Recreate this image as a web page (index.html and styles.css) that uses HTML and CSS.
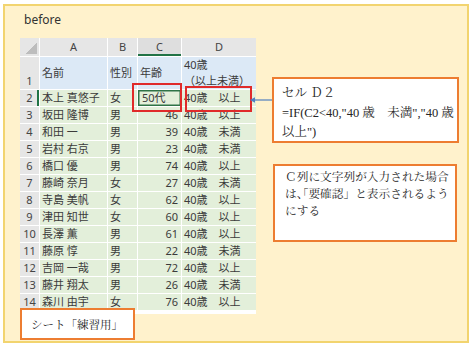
FILE: index.html
```html
<!DOCTYPE html>
<html lang="ja">
<head>
<meta charset="utf-8">
<title>before</title>
<link rel="stylesheet" href="styles.css">
</head>
<body>
<div class="frame">
  <div class="title">before</div>
  <div class="sheet">
    <div class="corner"></div><div class="colh">A</div><div class="colh">B</div><div class="colh sel">C</div><div class="colh">D</div>

    <div class="rh bottom">1</div><div class="c hd">名前</div><div class="c hd">性別</div><div class="c hd">年齢</div><div class="c hd two">40歳<br>（以上未満）</div>

    <div class="rh selrow">2</div><div class="c">本上 真悠子</div><div class="c">女</div><div class="c active">50代</div><div class="c">40歳　以上</div>
    <div class="rh">3</div><div class="c">坂田 隆博</div><div class="c">男</div><div class="c num">46</div><div class="c">40歳　以上</div>
    <div class="rh">4</div><div class="c">和田 一</div><div class="c">男</div><div class="c num">39</div><div class="c">40歳　未満</div>
    <div class="rh">5</div><div class="c">岩村 右京</div><div class="c">男</div><div class="c num">23</div><div class="c">40歳　未満</div>
    <div class="rh">6</div><div class="c">橋口 優</div><div class="c">男</div><div class="c num">74</div><div class="c">40歳　以上</div>
    <div class="rh">7</div><div class="c">藤崎 奈月</div><div class="c">女</div><div class="c num">27</div><div class="c">40歳　未満</div>
    <div class="rh">8</div><div class="c">寺島 美帆</div><div class="c">女</div><div class="c num">62</div><div class="c">40歳　以上</div>
    <div class="rh">9</div><div class="c">津田 知世</div><div class="c">女</div><div class="c num">60</div><div class="c">40歳　以上</div>
    <div class="rh">10</div><div class="c">長澤 薫</div><div class="c">男</div><div class="c num">61</div><div class="c">40歳　以上</div>
    <div class="rh">11</div><div class="c">藤原 惇</div><div class="c">男</div><div class="c num">22</div><div class="c">40歳　未満</div>
    <div class="rh">12</div><div class="c">吉岡 一哉</div><div class="c">男</div><div class="c num">72</div><div class="c">40歳　以上</div>
    <div class="rh">13</div><div class="c">藤井 翔太</div><div class="c">男</div><div class="c num">26</div><div class="c">40歳　未満</div>
    <div class="rh">14</div><div class="c">森川 由宇</div><div class="c">女</div><div class="c num">76</div><div class="c">40歳　以上</div>
  </div>

  <div class="redbox red-c2"></div>
  <div class="redbox red-d2"></div>

  <svg class="arrow" width="24" height="8" viewBox="0 0 24 8">
    <path d="M3 4 H24" stroke="#4f7fbf" stroke-width="1.2" fill="none"/>
    <polygon points="0,4 5,1.3 5,6.7" fill="#4f7fbf"/>
  </svg>

  <div class="callout formula">セル Ｄ２<br>=IF(C2&lt;40,"40 歳　未満","40 歳<br>以上")</div>
  <div class="callout note">Ｃ列に文字列が入力された場合<br>は<span class="halt">、「</span>要確認」と表示されるよう<br>にする</div>
  <div class="callout sheetname">シート「練習用」</div>
</div>
</body>
</html>
```
FILE: styles.css
```css
html, body {
  margin: 0;
  padding: 0;
  background: #ffffff;
}

.frame {
  position: relative;
  margin: 4px 0 0 3px;
  width: 462px;
  height: 335px;
  border: 2px solid #f2d46f;
  background: #fff2cc;
}

.title {
  box-sizing: border-box;
  height: 32px;
  padding: 6px 0 0 19px;
  font: 12px/16px "Noto Sans", "Noto Sans CJK JP", sans-serif;
  color: #333333;
}

.sheet {
  display: grid;
  grid-template-columns: 19px 67px 29px 43px 74px;
  grid-template-rows: 18px 32px repeat(13, 16px);
  gap: 1px;
  width: fit-content;
  margin-left: 15px;
  padding-bottom: 4px;
  background: #ffffff;
  font: 11px/16px "Noto Sans", "Noto Sans CJK JP", sans-serif;
  color: #3b3b3b;
}

.corner {
  background: #e6e6e6 linear-gradient(to bottom right, transparent 50%, #bdbdbd 50%) no-repeat right 2px bottom 2px / 11px 11px;
}

.colh {
  display: flex;
  align-items: center;
  justify-content: center;
  background: #e6e6e6;
  color: #444444;
}

.colh.sel {
  box-shadow: inset 0 -2px 0 #217346;
  background: #dedede;
}

.rh {
  display: flex;
  align-items: center;
  justify-content: center;
  background: #e6e6e6;
  color: #444444;
}

.rh.bottom {
  align-items: flex-end;
}

.rh.selrow {
  box-shadow: inset -2px 0 0 #217346;
}

.c {
  display: flex;
  align-items: center;
  padding: 0 2px;
  background: #e3efda;
  white-space: nowrap;
  overflow: hidden;
}

.c.hd {
  background: #dce9f6;
}

.c.two {
  align-items: center;
}

.c.num {
  justify-content: flex-end;
  padding-right: 3px;
}

.c.active {
  box-shadow: inset 0 0 0 1.5px #2e7346;
  padding-left: 4px;
}

.redbox {
  position: absolute;
  box-sizing: border-box;
  border: 2px solid #e02a2a;
}

.red-c2 {
  left: 127px;
  top: 77px;
  width: 50px;
  height: 29px;
}

.red-d2 {
  left: 180px;
  top: 80px;
  width: 67px;
  height: 26px;
}

.arrow {
  position: absolute;
  left: 245px;
  top: 90px;
}

.callout {
  position: absolute;
  box-sizing: border-box;
  border: 2px solid #ed7d31;
  background: #ffffff;
  color: #262626;
  font-family: "Liberation Serif", "Noto Serif CJK JP", "Noto Sans CJK JP", serif;
  white-space: nowrap;
}

.formula {
  left: 267px;
  top: 71px;
  width: 187px;
  height: 66px;
  padding: 5px 0 0 8px;
  font-size: 12.5px;
  line-height: 19.5px;
}

.note {
  left: 268px;
  top: 158px;
  width: 184px;
  height: 78px;
  padding: 3px 0 0 10px;
  font-size: 11.7px;
  line-height: 17px;
}

.halt {
  font-feature-settings: "halt";
}

.sheetname {
  left: 15px;
  top: 302px;
  width: 115px;
  height: 32px;
  display: flex;
  align-items: center;
  padding-left: 9px;
  font-size: 11.5px;
}
```
